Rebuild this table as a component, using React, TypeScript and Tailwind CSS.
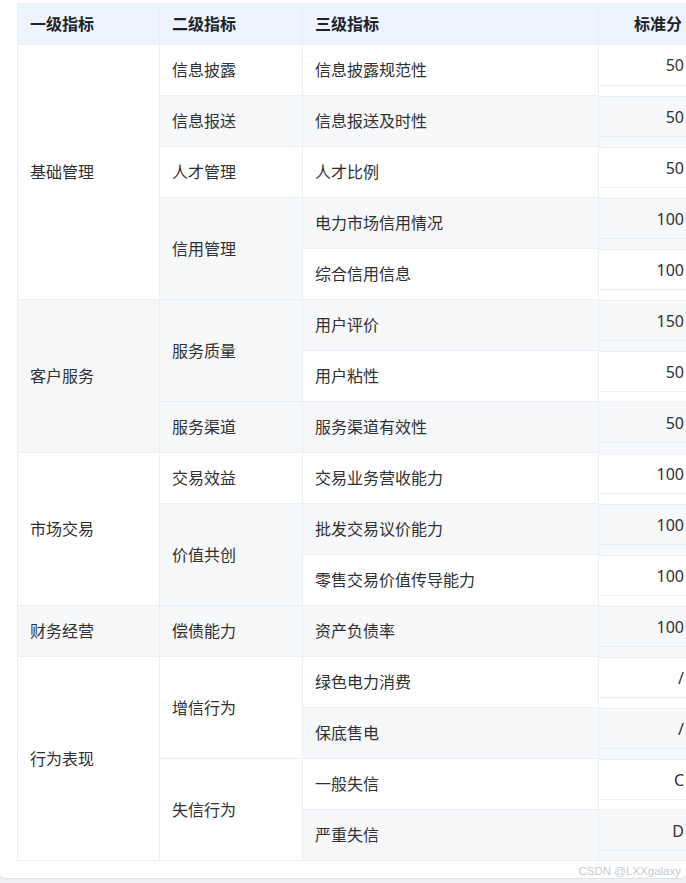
type Leaf = { name: string; score: string };
type Mid = { name: string; items: Leaf[] };
type Group = { name: string; mids: Mid[] };

const data: Group[] = [
  {
    name: "基础管理",
    mids: [
      { name: "信息披露", items: [{ name: "信息披露规范性", score: "50" }] },
      { name: "信息报送", items: [{ name: "信息报送及时性", score: "50" }] },
      { name: "人才管理", items: [{ name: "人才比例", score: "50" }] },
      {
        name: "信用管理",
        items: [
          { name: "电力市场信用情况", score: "100" },
          { name: "综合信用信息", score: "100" },
        ],
      },
    ],
  },
  {
    name: "客户服务",
    mids: [
      {
        name: "服务质量",
        items: [
          { name: "用户评价", score: "150" },
          { name: "用户粘性", score: "50" },
        ],
      },
      { name: "服务渠道", items: [{ name: "服务渠道有效性", score: "50" }] },
    ],
  },
  {
    name: "市场交易",
    mids: [
      { name: "交易效益", items: [{ name: "交易业务营收能力", score: "100" }] },
      {
        name: "价值共创",
        items: [
          { name: "批发交易议价能力", score: "100" },
          { name: "零售交易价值传导能力", score: "100" },
        ],
      },
    ],
  },
  {
    name: "财务经营",
    mids: [{ name: "偿债能力", items: [{ name: "资产负债率", score: "100" }] }],
  },
  {
    name: "行为表现",
    mids: [
      {
        name: "增信行为",
        items: [
          { name: "绿色电力消费", score: "/" },
          { name: "保底售电", score: "/" },
        ],
      },
      {
        name: "失信行为",
        items: [
          { name: "一般失信", score: "C" },
          { name: "严重失信", score: "D" },
        ],
      },
    ],
  },
];

const spanClass: Record<number, string> = {
  1: "row-span-1",
  2: "row-span-2",
  3: "row-span-3",
  4: "row-span-4",
  5: "row-span-5",
};

const TOTAL_ROWS = 16;

const bg = (row: number) => (row % 2 === 1 ? "bg-[#f7f8fa]" : "bg-white");

// fixed score column: its rows sit 1px lower and carry an extra strip
const ScoreCell = ({ row, score }: { row: number; score: string }) => (
  <div
    className={`flex flex-col border-[#ebeef5] ${bg(row)} ${row > 0 ? "border-t" : ""} ${
      row === TOTAL_ROWS - 1 ? "border-b" : ""
    }`}
  >
    <div
      className={`flex items-center justify-end pr-3 border-b border-[#ebeef5] ${
        row === 0 ? "h-[41px]" : "h-[40px]"
      }`}
    >
      {score}
    </div>
    <div className="flex-1" />
  </div>
);

export default function App() {
  const cells: JSX.Element[] = [];
  let row = 0;

  data.forEach((g) => {
    const gSpan = g.mids.reduce((n, m) => n + m.items.length, 0);
    cells.push(
      <div
        key={`g-${g.name}`}
        className={`${spanClass[gSpan]} ${bg(row)} flex items-center px-3 border-r border-b border-[#ebeef5]`}
      >
        {g.name}
      </div>
    );
    g.mids.forEach((m) => {
      cells.push(
        <div
          key={`m-${m.name}`}
          className={`${spanClass[m.items.length]} ${bg(row)} flex items-center px-3 border-r border-b border-[#ebeef5]`}
        >
          {m.name}
        </div>
      );
      m.items.forEach((it) => {
        cells.push(
          <div
            key={`l-${it.name}`}
            className={`${bg(row)} flex items-center px-3 border-r border-b border-[#ebeef5]`}
          >
            {it.name}
          </div>
        );
        cells.push(<ScoreCell key={`s-${it.name}`} row={row} score={it.score} />);
        row++;
      });
    });
  });

  return (
    <div
      className="relative w-[686px] h-[883px] overflow-hidden bg-[#eef0f4] text-[16px] text-[#303133]"
      style={{ fontFamily: '"Noto Sans", "Noto Sans CJK SC", sans-serif' }}
    >
      <div className="h-[879px] bg-white rounded-b-[6px] border-b border-[#dde1e8] pt-[3px] pl-[17px]">
        <div className="grid w-[679px] grid-cols-[142px_143px_296px_97px] grid-rows-[41px_repeat(16,51px)] border-l border-t border-[#ebeef5]">
          {/* header */}
          {["一级指标", "二级指标", "三级指标"].map((h) => (
            <div
              key={h}
              className="flex items-center px-3 font-bold text-[#1f2329] bg-[#edf4fe] border-r border-b border-[#ebeef5]"
            >
              {h}
            </div>
          ))}
          <div className="flex items-center justify-end pr-[14px] font-bold text-[#1f2329] bg-[#edf4fe] border-b border-[#ebeef5]">
            标准分
          </div>
          {cells}
        </div>
      </div>

      {/* watermark */}
      <div
        className="absolute right-[5px] top-[863px] text-[11.5px] text-[#c9c9c9]"
        style={{ fontFamily: '"Liberation Sans", sans-serif' }}
      >
        CSDN @LXXgalaxy
      </div>
    </div>
  );
}
